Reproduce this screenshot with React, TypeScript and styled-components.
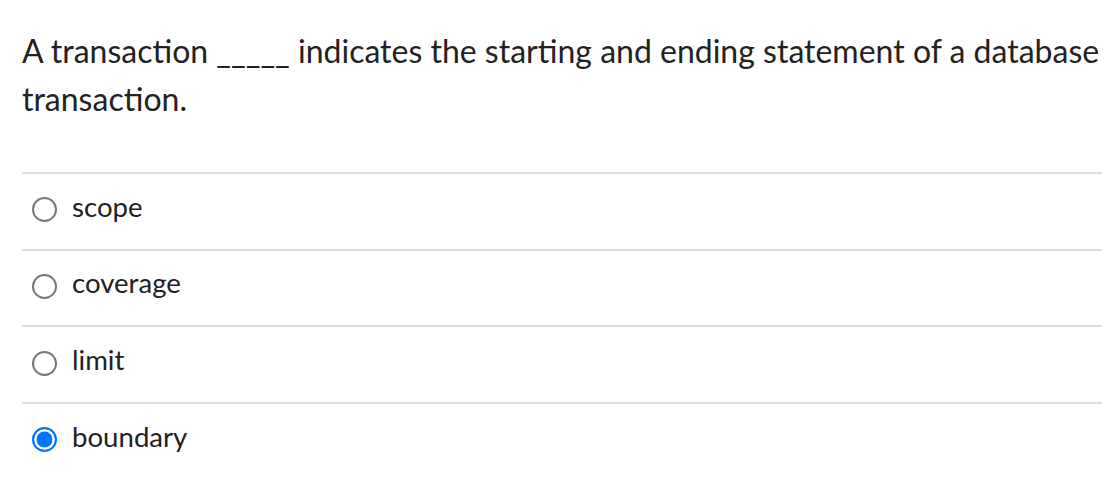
import React, { useState } from 'react'
import styled, { createGlobalStyle } from 'styled-components'

const GlobalStyle = createGlobalStyle`
  html, body {
    margin: 0;
    padding: 0;
    background: #ffffff;
    font-family: Lato, "Open Sans", sans-serif;
    color: #2d3b45;
  }
`

const Page = styled.div`
  padding: 27px 10px 0 22px;
  width: 1080px;
`

const Question = styled.p`
  margin: 0 0 49px 0;
  font-size: 32px;
  line-height: 48px;
  color: #222;
`

const Blank = styled.span`
  letter-spacing: 0;
`

const Options = styled.div`
  display: flex;
  flex-direction: column;
`

const Option = styled.label`
  display: flex;
  align-items: center;
  gap: 15px;
  height: 74.7px;
  box-sizing: content-box;
  padding: 0 0 0 10px;
  border-top: 2px solid #dcdcdc;
  font-size: 27.6px;
  color: #222;
  cursor: pointer;
`

const OptionText = styled.span`
  line-height: 1;
  padding-bottom: 10px;
`

const Radio = styled.span<{ $checked: boolean }>`
  box-sizing: border-box;
  width: 25px;
  height: 25px;
  margin-bottom: 3px;
  border-radius: 50%;
  flex-shrink: 0;
  border: 2px solid ${(p) => (p.$checked ? '#0374ff' : '#777')};
  background: ${(p) => (p.$checked ? '#0374ff' : '#fff')};
  box-shadow: ${(p) => (p.$checked ? 'inset 0 0 0 2.5px #fff' : 'none')};
`

const choices = ['scope', 'coverage', 'limit', 'boundary']

export default function App() {
  const [selected, setSelected] = useState('boundary')

  return (
    <Page>
      <GlobalStyle />
      <Question>
        A transaction <Blank>_____</Blank> indicates the starting and ending statement of a database
        transaction.
      </Question>
      <Options>
        {choices.map((c) => (
          <Option key={c} onClick={() => setSelected(c)}>
            <Radio $checked={selected === c} />
            <OptionText>{c}</OptionText>
          </Option>
        ))}
      </Options>
    </Page>
  )
}
